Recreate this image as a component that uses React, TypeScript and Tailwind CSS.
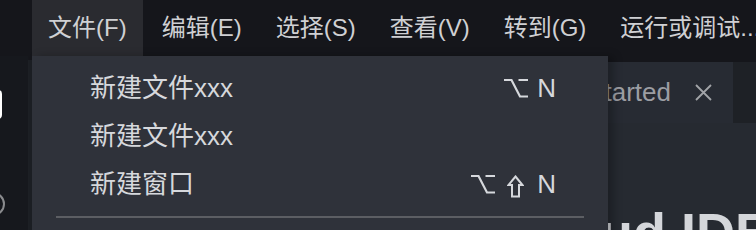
import React from "react"

const font = { fontFamily: '"Liberation Sans", "Noto Sans CJK SC", sans-serif' }

const menus = ["文件(F)", "编辑(E)", "选择(S)", "查看(V)", "转到(G)", "运行或调试..."]

type Key = "opt" | "shift" | "N"

const items: { label: string; keys: Key[] }[] = [
  { label: "新建文件xxx", keys: ["opt", "N"] },
  { label: "新建文件xxx", keys: [] },
  { label: "新建窗口", keys: ["opt", "shift", "N"] },
]

function KeyGlyph({ k }: { k: Key }) {
  if (k === "opt") {
    return (
      <svg width="24" height="20" viewBox="0 0 24 20" className="mr-[-2px]">
        <path d="M0 2 H7.5 L16 18.5 H24 M14.5 2 H24" stroke="currentColor" strokeWidth="2.2" fill="none" />
      </svg>
    )
  }
  if (k === "shift") {
    return (
      <svg width="17" height="23" viewBox="0 0 17 23" className="mt-1 ml-[3px] mr-[2px]">
        <path d="M8.5 1.5 L15.5 10 H12 V21.5 H5 V10 H1.5 Z" stroke="currentColor" strokeWidth="2" fill="none" />
      </svg>
    )
  }
  return <span className="text-[26px] leading-none">N</span>
}

export default function App() {
  return (
    <div
      className="relative w-[756px] h-[230px] overflow-hidden bg-[#15161b] text-[#cfd0d3]"
      style={font}
    >
      {/* Menu bar */}
      <div className="flex h-14 items-center pl-8 whitespace-nowrap bg-[#15161b]">
        {menus.map((m, i) => (
          <div
            key={m}
            className={
              i === 0
                ? "flex h-full shrink-0 items-center px-4 text-[24px] bg-[#2a2b30]"
                : "flex h-full shrink-0 items-center pl-[19px] pr-[15px] text-[24px]"
            }
          >
            {m}
          </div>
        ))}
      </div>

      {/* Workbench behind the menu */}
      <div className="flex h-[174px]">
        {/* Activity bar */}
        <div className="flex w-7 shrink-0 flex-col bg-[#16181d]">
          <div className="-ml-[14px] mt-[34px] h-[29px] w-4 rounded-[4px] border-2 border-white" />
          <div className="-ml-[21px] mt-[73px] h-[24px] w-[26px] rounded-full border-2 border-[#8a8b8e]" />
        </div>
        <div className="mt-1 w-1 shrink-0 bg-[#1c1f24]" />
        {/* Sidebar (hidden under the menu) */}
        <div className="mt-1 w-[368px] shrink-0 bg-[#1b1d22]" />
        {/* Editor */}
        <div className="mt-[6px] flex flex-1 flex-col">
          <div className="flex h-[61px] shrink-0 whitespace-nowrap">
            <div className="flex w-[333px] items-center justify-end gap-[24px] pr-[21px] bg-[#272b33]">
              <span className="text-[26px] text-[#9c9ea3]">Get Started</span>
              <svg width="17" height="17" viewBox="0 0 17 17" className="text-[#a2a4a8]">
                <path d="M1 1 L16 16 M16 1 L1 16" stroke="currentColor" strokeWidth="1.8" />
              </svg>
            </div>
            <div className="flex-1 bg-[#1e2126]" />
          </div>
          <div className="flex-1 bg-[#262a31] pl-[113px] pt-[82px]">
            <div className="whitespace-nowrap text-[54px] font-bold leading-none text-[#d4d6da]">
              Cloud IDE
            </div>
          </div>
        </div>
      </div>

      {/* Dropdown menu */}
      <div className="absolute left-8 top-14 w-[576px] bg-[#2f323a] pt-2 pb-6 shadow-[6px_0_8px_rgba(0,0,0,0.25)]">
        {items.map((it, i) => (
          <div key={i} className="flex h-12 items-center justify-between pl-[58px] pr-[52px] text-[#d6d8dc]">
            <span className="text-[26px]">{it.label}</span>
            <span className="flex items-center gap-[11px]">
              {it.keys.map((k, j) => (
                <KeyGlyph key={j} k={k} />
              ))}
            </span>
          </div>
        ))}
        <div className="mx-6 mt-2 h-[2px] bg-[#5c5e63]" />
      </div>
    </div>
  )
}
